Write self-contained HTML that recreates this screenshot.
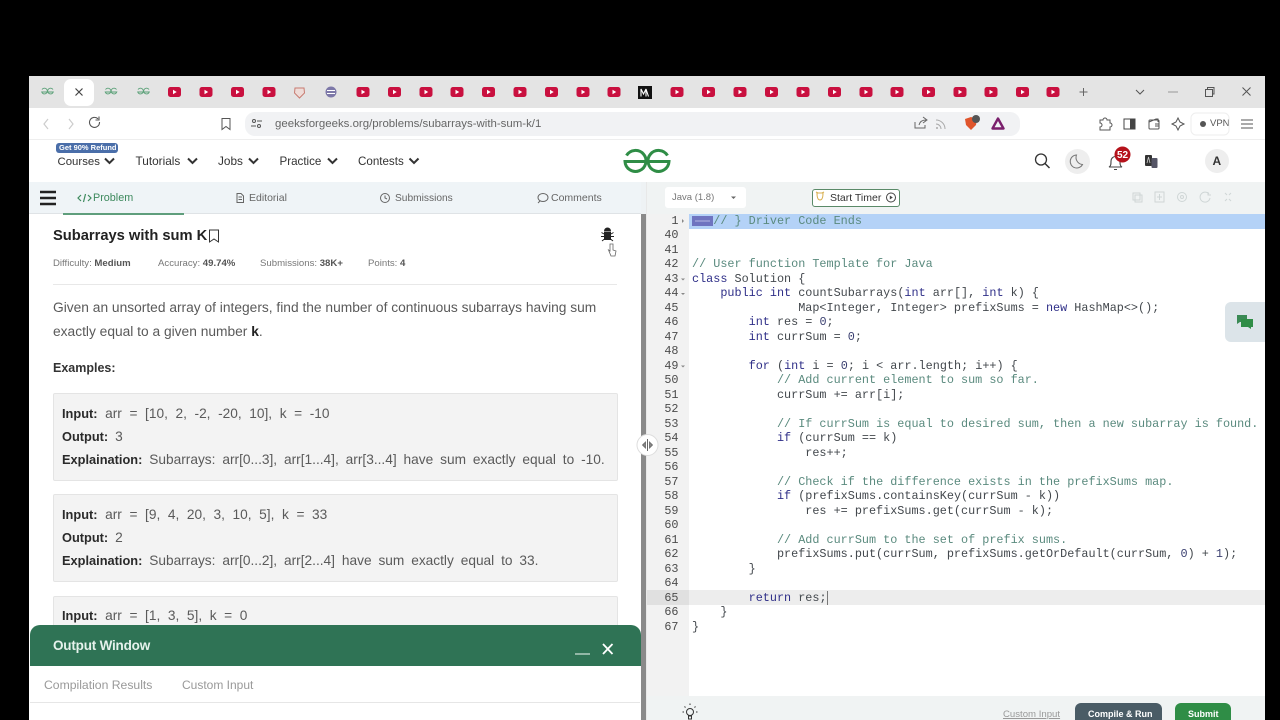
<!DOCTYPE html>
<html><head><meta charset="utf-8"><style>
html,body{margin:0;padding:0;width:1280px;height:720px;overflow:hidden;background:#000}
body{position:relative;font-family:"Liberation Sans",sans-serif;color:#333}
.b{position:absolute}
.t{position:absolute;white-space:nowrap;line-height:1}
b{font-weight:bold}
#code{position:absolute;left:692px;top:214px;font:11.8px/14.48px "Liberation Mono",monospace;color:#43484d;white-space:pre}
#nums{position:absolute;left:647px;width:31.500px;top:214px;font:11.8px/14.48px "Liberation Mono",monospace;color:#4c4c4c;text-align:right;white-space:pre}
.k{color:#2f2f88}.c{color:#5a8a7e}.n{color:#3a3f70}
svg{position:absolute;left:0;top:0}
.ex{position:absolute;left:53px;width:565px;background:#f3f3f3;border:1px solid #e4e4e4;box-sizing:border-box;border-radius:2px}
.ex .t{font-size:13.7px;color:#5a5a5a;word-spacing:3.100px}
.ex .i{word-spacing:3.800px}
.ex b{color:#2a2a2a;font-size:12.800px;word-spacing:0}
</style></head><body>
<div class="b" style="left:29px;top:76px;width:1236px;height:644px;background:#fff"></div>
<div class="b" style="left:29px;top:76px;width:1236px;height:32px;background:#e4e4e4"></div>
<div class="b" style="left:64px;top:79px;width:30px;height:27px;background:#fff;border-radius:7px"></div>
<div class="b" style="left:245px;top:112px;width:775px;height:24px;background:#f1f2f4;border-radius:10px"></div>
<div class="b" style="left:29px;top:139px;width:1236px;height:1px;background:#eee"></div>

<div class="t" style="left:275px;top:119px;font-size:11.450px;color:#666">geeksforgeeks.org/problems/subarrays-with-sum-k/1</div>
<div class="t" style="left:1210px;top:119px;font-size:9.500px;color:#555">VPN</div>

<!-- site header -->
<div class="b" style="left:56px;top:143px;width:62px;height:10px;background:#4a6ea9;border-radius:3px"></div>
<div class="t" style="left:59px;top:144px;font-size:7.500px;font-weight:bold;color:#fff">Get 90% Refund</div>
<div class="t" style="left:57.500px;top:157px;font-size:11.400px;color:#333">Courses</div>
<div class="t" style="left:135.500px;top:156px;font-size:11.800px;color:#333">Tutorials</div>
<div class="t" style="left:218px;top:156px;font-size:11.800px;color:#333">Jobs</div>
<div class="t" style="left:279.500px;top:156px;font-size:11.600px;color:#333">Practice</div>
<div class="t" style="left:358px;top:156px;font-size:11.600px;color:#333">Contests</div>

<div class="b" style="left:1065px;top:149px;width:25px;height:25px;background:#eee;border-radius:50%"></div>
<div class="b" style="left:1205px;top:149px;width:24px;height:24px;background:#eee;border-radius:50%"></div>
<div class="t" style="left:1212.500px;top:155px;font-size:12px;font-weight:bold;color:#333">A</div>

<!-- left tabs -->
<div class="b" style="left:29px;top:182px;width:612px;height:32px;background:#eff4f7;border-bottom:1px solid #dfe3e6;box-sizing:border-box"></div>
<div class="b" style="left:63px;top:213px;width:121px;height:1.500px;background:#5f9e7c"></div>
<div class="t" style="left:93px;top:192.500px;font-size:10.800px;color:#3e8a5e">Problem</div>
<div class="t" style="left:249px;top:192.500px;font-size:10.500px;color:#666">Editorial</div>
<div class="t" style="left:395px;top:194px;font-size:10.200px;color:#666">Submissions</div>
<div class="t" style="left:551px;top:192.500px;font-size:10.500px;color:#666">Comments</div>

<!-- left body -->
<div class="t" style="left:53px;top:228.500px;font-size:14.700px;font-weight:bold;color:#222">Subarrays with sum K</div>
<div class="t" style="left:53px;top:258.500px;font-size:9.600px;color:#777">Difficulty: <b style="color:#555">Medium</b></div>
<div class="t" style="left:158px;top:258.500px;font-size:9.600px;color:#777">Accuracy: <b style="color:#555">49.74%</b></div>
<div class="t" style="left:260px;top:258.500px;font-size:9.600px;color:#777">Submissions: <b style="color:#555">38K+</b></div>
<div class="t" style="left:368px;top:258.500px;font-size:9.600px;color:#777">Points: <b style="color:#555">4</b></div>
<div class="b" style="left:53px;top:284px;width:564px;height:1px;background:#e8e8e8"></div>
<div class="t" style="left:53px;top:300.500px;font-size:13.780px;color:#5a5a5a">Given an unsorted array of integers, find the number of continuous subarrays having sum</div>
<div class="t" style="left:53px;top:324.500px;font-size:13.780px;color:#5a5a5a">exactly equal to a given number <b style="color:#222">k</b>.</div>
<div class="t" style="left:53px;top:361.500px;font-size:12.500px;font-weight:bold;color:#333">Examples:</div>

<div class="ex" style="top:393px;height:88px">
<div class="t i" style="left:8px;top:12.500px"><b>Input:</b> arr = [10, 2, -2, -20, 10], k = -10</div>
<div class="t" style="left:8px;top:36px"><b>Output:</b> 3</div>
<div class="t" style="left:8px;top:59px"><b>Explaination:</b> Subarrays: arr[0...3], arr[1...4], arr[3...4] have sum exactly equal to -10.</div>
</div>
<div class="ex" style="top:494px;height:88px">
<div class="t i" style="left:8px;top:12.500px"><b>Input:</b> arr = [9, 4, 20, 3, 10, 5], k = 33</div>
<div class="t" style="left:8px;top:36px"><b>Output:</b> 2</div>
<div class="t" style="left:8px;top:59px"><b>Explaination:</b> Subarrays: arr[0...2], arr[2...4] have sum exactly equal to 33.</div>
</div>
<div class="ex" style="top:596px;height:60px">
<div class="t i" style="left:8px;top:11.500px"><b>Input:</b> arr = [1, 3, 5], k = 0</div>
</div>

<!-- output window -->
<div class="b" style="left:30px;top:625px;width:611px;height:95px;background:#fff"></div>
<div class="b" style="left:30px;top:625px;width:611px;height:41px;background:#2f7355;border-radius:10px 10px 0 0"></div>
<div class="t" style="left:53px;top:639px;font-size:13.500px;font-weight:bold;color:#e6f2ec;letter-spacing:-.2px">Output Window</div>
<div class="t" style="left:44px;top:679px;font-size:12.200px;color:#999">Compilation Results</div>
<div class="t" style="left:182px;top:679px;font-size:12px;color:#999">Custom Input</div>
<div class="b" style="left:30px;top:702px;width:610px;height:1px;background:#e6e6e6"></div>

<div class="b" style="left:641px;top:214px;width:5px;height:506px;background:#8a8a8a"></div>
<div class="b" style="left:641px;top:182px;width:6px;height:32px;background:#eef2f4"></div>
<div class="b" style="left:646px;top:182px;width:1px;height:538px;background:#e8e8e8"></div>

<!-- right panel -->
<div class="b" style="left:647px;top:182px;width:618px;height:32px;background:#f0f3f3"></div>
<div class="b" style="left:665px;top:187px;width:81px;height:21px;background:#fff;border-radius:3px"></div>
<div class="t" style="left:672px;top:192.500px;font-size:9.500px;color:#777">Java (1.8)</div>
<div class="b" style="left:812px;top:189px;width:86px;height:16px;background:#fff;border:1px solid #5a8a68;border-radius:3px"></div>
<div class="t" style="left:830px;top:192.500px;font-size:10.500px;color:#333">Start Timer</div>

<div class="b" style="left:647px;top:214px;width:42px;height:482px;background:#f2f2f2"></div>
<div class="b" style="left:689px;top:214px;width:576px;height:14.500px;background:#b4d2f7"></div>
<div class="b" style="left:692px;top:216px;width:21px;height:10px;background:#6f74c0"></div>
<div class="b" style="left:647px;top:590px;width:42px;height:14.500px;background:#e0e0e0"></div>
<div class="b" style="left:689px;top:590px;width:576px;height:14.500px;background:#ededed"></div>
<div class="b" style="left:827px;top:590.500px;width:1px;height:14px;background:#777"></div>

<div id="nums">1
40
41
42
43
44
45
46
47
48
49
50
51
52
53
54
55
56
57
58
59
60
61
62
63
64
65
66
67</div>
<div id="code"><span class="c">   // } Driver Code Ends</span>


<span class="c">// User function Template for Java</span>
<span class="k">class</span> Solution {
    <span class="k">public int</span> countSubarrays(<span class="k">int</span> arr[], <span class="k">int</span> k) {
               Map&lt;Integer, Integer&gt; prefixSums = <span class="k">new</span> HashMap&lt;&gt;();
        <span class="k">int</span> res = <span class="n">0</span>;
        <span class="k">int</span> currSum = <span class="n">0</span>;

        <span class="k">for</span> (<span class="k">int</span> i = <span class="n">0</span>; i &lt; arr.length; i++) {
            <span class="c">// Add current element to sum so far.</span>
            currSum += arr[i];

            <span class="c">// If currSum is equal to desired sum, then a new subarray is found.</span>
            <span class="k">if</span> (currSum == k)
                res++;

            <span class="c">// Check if the difference exists in the prefixSums map.</span>
            <span class="k">if</span> (prefixSums.containsKey(currSum - k))
                res += prefixSums.get(currSum - k);

            <span class="c">// Add currSum to the set of prefix sums.</span>
            prefixSums.put(currSum, prefixSums.getOrDefault(currSum, <span class="n">0</span>) + <span class="n">1</span>);
        }

        <span class="k">return</span> res;
    }
}</div>

<!-- bottom bar -->
<div class="b" style="left:647px;top:696px;width:618px;height:24px;background:#f0f3f3"></div>
<div class="b" style="left:1075px;top:703px;width:87px;height:17px;background:#4a5c66;border-radius:6px 6px 0 0"></div>
<div class="b" style="left:1175px;top:703px;width:56px;height:17px;background:#2f8d46;border-radius:6px 6px 0 0"></div>
<div class="t" style="left:1003px;top:710px;font-size:9.600px;color:#999;text-decoration:underline">Custom Input</div>
<div class="t" style="left:1088px;top:710px;font-size:9px;font-weight:bold;color:#fff">Compile &amp; Run</div>
<div class="t" style="left:1188px;top:710px;font-size:9px;font-weight:bold;color:#fff">Submit</div>

<div class="b" style="left:1225px;top:302px;width:40px;height:40px;background:#dce4e9;border-radius:6px 0 0 6px"></div>

<svg width="1280" height="720" viewBox="0 0 1280 720" fill="none">
<defs>
<g id="yt"><rect x="-6.500" y="-5" width="13" height="10" rx="2.500" fill="#c9103f"/><path d="M-1.500-2.200 2.200 0-1.500 2.200z" fill="#fff"/></g>
<g id="gf"><path d="M-5.500-2.500A2.900 2.900 0 1 1-5.800 0H5.800A2.900 2.900 0 1 1 5.500-2.500" stroke="#5aa077" stroke-width=".9"/></g>
</defs>
<use href="#gf" x="47.500" y="92"/><use href="#gf" x="111" y="92"/><use href="#gf" x="143.500" y="92"/>
<path d="M75.500 88.500l7 7M82.500 88.500l-7 7" stroke="#444" stroke-width="1.200"/>
<use href="#yt" x="174.500" y="92"/><use href="#yt" x="206" y="92"/><use href="#yt" x="237.500" y="92"/><use href="#yt" x="269" y="92"/>
<path d="M295 88h9l.5 5-5 5-5-5z" fill="#eedcd8" stroke="#c87a70"/>
<circle cx="331" cy="92" r="5.500" fill="#7d78a8"/><path d="M327 90.500h8M327 93.500h8" stroke="#fff"/>
<use href="#yt" x="363" y="92"/><use href="#yt" x="394.500" y="92"/><use href="#yt" x="426" y="92"/><use href="#yt" x="457" y="92"/><use href="#yt" x="488.500" y="92"/><use href="#yt" x="520" y="92"/><use href="#yt" x="551.500" y="92"/><use href="#yt" x="583" y="92"/><use href="#yt" x="614" y="92"/>
<rect x="638" y="86" width="14" height="13" fill="#111"/><path d="M641 96.500V89l2.500 5 2.500-5v7.500M646 89l2.500 7.500" stroke="#fff" stroke-width="1.100"/>
<use href="#yt" x="677" y="92"/><use href="#yt" x="708.500" y="92"/><use href="#yt" x="740" y="92"/><use href="#yt" x="771.500" y="92"/><use href="#yt" x="803" y="92"/><use href="#yt" x="834.500" y="92"/><use href="#yt" x="866" y="92"/><use href="#yt" x="897" y="92"/><use href="#yt" x="928.500" y="92"/><use href="#yt" x="960" y="92"/><use href="#yt" x="991" y="92"/><use href="#yt" x="1022.500" y="92"/><use href="#yt" x="1053" y="92"/>
<path d="M1083.500 88v8M1079.500 92h8" stroke="#666"/>
<path d="M1136 90l4 4 4-4" stroke="#555"/><path d="M1168 92h10" stroke="#999"/>
<rect x="1205.500" y="89.500" width="7" height="7" stroke="#555"/><path d="M1207.500 89.500v-2h6.500v6.500h-2" stroke="#555"/>
<path d="M1242.500 87.500l8 8M1250.500 87.500l-8 8" stroke="#555"/>
<!-- toolbar -->
<path d="M48 119l-4 5 4 5" stroke="#ccc" stroke-width="1.200"/><path d="M69 119l4 5-4 5" stroke="#ccc" stroke-width="1.200"/>
<path d="M99.500 122a5 5 0 1 1-1.500-3.200M99 116.500V120h-3.500" stroke="#555" stroke-width="1.100"/>
<path d="M222 118.500h8v11l-4-3-4 3z" stroke="#555"/>
<circle cx="254" cy="121" r="1.500" stroke="#555"/><path d="M257 121h5M251 126h5" stroke="#555"/><circle cx="259" cy="126" r="1.500" stroke="#555"/>
<path d="M915 122v6h10v-3M919 125c1-4 4-5 7-5M923 117l4 3-4 3" stroke="#666"/>
<path d="M936 120a9 9 0 0 1 9 9M936 124a5 5 0 0 1 5 5" stroke="#aaa"/><circle cx="937" cy="128" r="1" fill="#aaa"/>
<path d="M965 119l6-2 6 2-1 6-5 5-5-5z" fill="#e0552c"/><circle cx="976" cy="119" r="4" fill="#555"/>
<path d="M998 118.500l5.500 10h-11z" stroke="#7a1f6c" stroke-width="2.400" stroke-linejoin="round"/>
<path d="M1100 120h3a2 2 0 0 1 4 0h3v3a2 2 0 0 1 0 4v3h-10v-3a2 2 0 0 0 0-4z" stroke="#555"/>
<rect x="1124" y="119" width="11" height="10" stroke="#444"/><rect x="1130" y="119" width="5" height="10" fill="#444"/>
<rect x="1149" y="120" width="10" height="9" rx="1" stroke="#555"/><path d="M1149 122l7-3h2v3M1155 124h4v2h-4" stroke="#555"/>
<path d="M1178 118l2 4 4 2-4 2-2 4-2-4-4-2 4-2z" stroke="#555"/>
<rect x="1191" y="113" width="38" height="22" rx="5" stroke="#eee"/><circle cx="1203" cy="124" r="3" fill="#555"/>
<path d="M1241 120h12M1241 124h12M1241 128h12" stroke="#555"/>
<!-- nav chevrons -->
<path d="M105 158.500l4.500 4.500 4.500-4.500M188 158.500l4.500 4.500 4.500-4.500M249 158.500l4.500 4.500 4.500-4.500M328 158.500l4.500 4.500 4.500-4.500M409.500 158.500l4.500 4.500 4.500-4.500" stroke="#333" stroke-width="2"/>
<!-- gfg logo -->
<path d="M626.500 155.500A10.500 10.500 0 1 1 625 161.500H669A10.500 10.500 0 1 1 667.500 155.500" stroke="#2f8d46" stroke-width="3"/>
<!-- header right -->
<circle cx="1041" cy="159.500" r="5.500" stroke="#333" stroke-width="1.300"/><path d="M1045 163.500l4.500 4.500" stroke="#333" stroke-width="1.500"/>
<path d="M1076.500 155a6.500 6.500 0 1 0 6 9.500 7 7 0 0 1-6-9.500z" stroke="#777"/>
<path d="M1109 167c2-1 2-3 2-6a4.500 4.500 0 0 1 9 0c0 3 0 5 2 6z" stroke="#444" stroke-width="1.100"/><path d="M1114 169.500h3" stroke="#444"/>
<circle cx="1122.500" cy="154.500" r="8" fill="#b5121b"/>
<text x="1122.500" y="158" text-anchor="middle" font-family="Liberation Sans, sans-serif" font-size="10" font-weight="bold" fill="#fff">52</text>
<rect x="1145" y="155" width="7" height="11" fill="#333" rx="1"/><rect x="1151.500" y="158" width="6" height="10" fill="#556" rx="1"/><path d="M1147 163l1.500-6 1.500 6" stroke="#ccc" stroke-width=".8"/>
<!-- left tab icons -->
<path d="M40 192h16M40 198h16M40 204h16" stroke="#222" stroke-width="2.400"/>
<path d="M81 195l-3 3 3 3M88 195l3 3-3 3M85.500 194l-2 8" stroke="#3e8a5e" stroke-width="1.200"/>
<path d="M237 193.500h4l2.500 2.500v6.500h-6.500zM238.500 197h3.500M238.500 199.500h3.500" stroke="#666"/>
<circle cx="385" cy="198" r="4.500" stroke="#666"/><path d="M385 195.500V198l2 1" stroke="#666"/>
<ellipse cx="543" cy="197.500" rx="5" ry="4" stroke="#666"/><path d="M540 201l-2 2" stroke="#666"/>
<!-- title icons -->
<path d="M209.500 230h9v12l-4.500-3-4.500 3z" stroke="#333"/>
<path d="M604.500 231a3 3 0 0 1 6 0zM604.500 232.500h6v7h-6zM604 234l-2.500-1.500M611 234l2.500-1.500M604 236.500h-3M611 236.500h3M604.500 239l-2.500 2M610.500 239l2.500 2" stroke="#222" fill="#222" stroke-width="1"/>
<path d="M610 244v7l-1.500-1 2.500 6h4l1-5-3-1v-6z" fill="#fff" stroke="#666" stroke-width=".8"/>
<!-- output controls -->
<path d="M575 654h15" stroke="#d5e5dc" stroke-width="1.200"/>
<path d="M603 644l9.500 10M612.500 644l-9.500 10" stroke="#fff" stroke-width="1.800"/>
<!-- splitter handle -->
<circle cx="647.500" cy="445" r="10.500" fill="#fff" stroke="#ddd"/><path d="M647.500 439v12" stroke="#666"/><path d="M645.500 442l-3 3 3 3zM649.500 442l3 3-3 3z" stroke="#666" fill="#888" stroke-width=".8"/>
<!-- right toolbar icons -->
<g stroke="#cfd6d6"><rect x="1133" y="193" width="7" height="7"/><rect x="1135" y="195" width="7" height="7"/><rect x="1155" y="192" width="9" height="10"/><path d="M1159.500 194v6M1157 197h5"/><circle cx="1182" cy="197" r="4.500"/><circle cx="1182" cy="197" r="1.500"/><path d="M1209 194a5 5 0 1 0 1 4M1208 192v3h3"/><path d="M1225 193l2 2M1231 193l-2 2M1225 201l2-2M1231 201l-2-2"/></g>
<path d="M817 193c0 5 1 7 3 7s3-2 3-7zM816 192l2 1M824 192l-2 1" stroke="#d8b050" stroke-width="1"/>
<circle cx="891" cy="197.500" r="4.500" stroke="#444"/><path d="M889.800 195.500l3 2-3 2z" fill="#444"/>
<path d="M731 196.500h5l-2.500 2.500z" fill="#666"/>
<!-- gutter fold -->
<path d="M682 219l2 2-2 2z" fill="#888"/><path d="M681 278.500h4l-2 2zM681 293h4l-2 2zM681 365.500h4l-2 2z" fill="#888"/>
<path d="M695 221h15" stroke="#b5b8e5"/>
<!-- chat -->
<path d="M1237 315h10v7h-7l-3 2z" fill="#3a8a55"/><path d="M1241 319h12v8h-2v2l-3-2h-7z" fill="#2f8d46"/>
<!-- bulb -->
<circle cx="690" cy="712" r="3.500" stroke="#333"/><path d="M688.500 716h3v3h-3zM690 705v-1.500M684 712h-1.500M697.500 712H696M685.500 707.500l-1-1M694.500 707.500l1-1" stroke="#333"/>
</svg>
</body></html>
